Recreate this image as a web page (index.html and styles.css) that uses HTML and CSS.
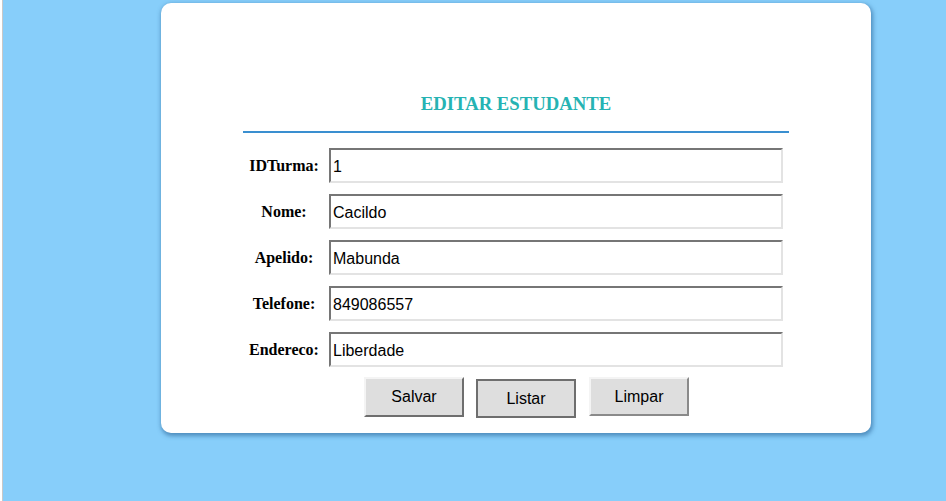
FILE: index.html
```html
<!DOCTYPE html>
<html>
<head>
<meta charset="utf-8">
<link rel="stylesheet" href="styles.css">
</head>
<body>
<div class="frame">
  <div class="card">
    <h3 class="title">EDITAR ESTUDANTE</h3>
    <div class="rule"></div>
    <form class="form">
      <div class="row"><label class="lbl">IDTurma:</label><input class="field" type="text" value="1"></div>
      <div class="row"><label class="lbl">Nome:</label><input class="field" type="text" value="Cacildo"></div>
      <div class="row"><label class="lbl">Apelido:</label><input class="field" type="text" value="Mabunda"></div>
      <div class="row"><label class="lbl">Telefone:</label><input class="field" type="text" value="849086557"></div>
      <div class="row"><label class="lbl">Endereco:</label><input class="field" type="text" value="Liberdade"></div>
      <div class="actions">
        <button type="button" class="btn">Salvar</button>
        <button type="button" class="btn btn-pressed">Listar</button>
        <button type="button" class="btn btn-light">Limpar</button>
      </div>
    </form>
  </div>
</div>
</body>
</html>
```
FILE: styles.css
```css
html, body {
  margin: 0;
  padding: 0;
  background: #ffffff;
  height: 100%;
}
.frame {
  margin-left: 2px;
  border-left: 1px solid #c8c8c8;
  background: #87cefa;
  min-height: 501px;
  box-sizing: border-box;
  padding-top: 3px;
  padding-left: 158px;
  overflow: hidden;
}
.card {
  width: 710px;
  height: 430px;
  background: #ffffff;
  border-radius: 10px;
  box-shadow: 1px 2px 4px 1px rgba(60, 120, 170, 0.75);
  box-sizing: border-box;
  padding-top: 91px;
  display: flex;
  flex-direction: column;
  align-items: center;
}
.title {
  margin: 0;
  font-family: "Liberation Serif", "Times New Roman", serif;
  font-size: 18.72px;
  line-height: 20px;
  font-weight: bold;
  color: #26b3b3;
  text-align: center;
}
.rule {
  width: 546px;
  height: 2px;
  background: #3a8fd0;
  margin-top: 17px;
}
.form {
  margin: 15px 6px 0 0;
  display: flex;
  flex-direction: column;
  gap: 11px;
  width: 540px;
}
.row {
  display: flex;
  align-items: center;
  gap: 4px;
}
.lbl {
  width: 82px;
  text-align: center;
  font-family: "Liberation Serif", "Times New Roman", serif;
  font-weight: bold;
  font-size: 16px;
  color: #000;
}
.field {
  width: 454px;
  height: 35px;
  box-sizing: border-box;
  border-style: solid;
  border-width: 2px;
  border-color: #767676 #e3e3e3 #e3e3e3 #767676;
  padding: 3px 2px 1px 2px;
  font-family: "Liberation Sans", Arial, sans-serif;
  font-size: 16px;
  color: #000;
  background: #fff;
  outline: none;
  margin: 0;
}
.actions {
  display: flex;
  gap: 12px;
  margin-top: -1px;
  padding-left: 121px;
  align-items: flex-start;
}
.btn {
  width: 100px;
  height: 40px;
  box-sizing: border-box;
  background: #dedede;
  border-style: solid;
  border-width: 2px;
  border-color: #f4f4f4 #6e6e6e #6e6e6e #f4f4f4;
  font-family: "Liberation Sans", Arial, sans-serif;
  font-size: 16px;
  color: #000;
  padding: 0;
  margin: 0;
}
.btn-pressed {
  margin-top: 2px;
  height: 39px;
  border-color: #6e6e6e #6e6e6e #6e6e6e #6e6e6e;
}
.btn-light {
  margin-left: 1px;
  height: 39px;
  border-color: #f4f4f4 #8a8a8a #8a8a8a #f4f4f4;
}
```
